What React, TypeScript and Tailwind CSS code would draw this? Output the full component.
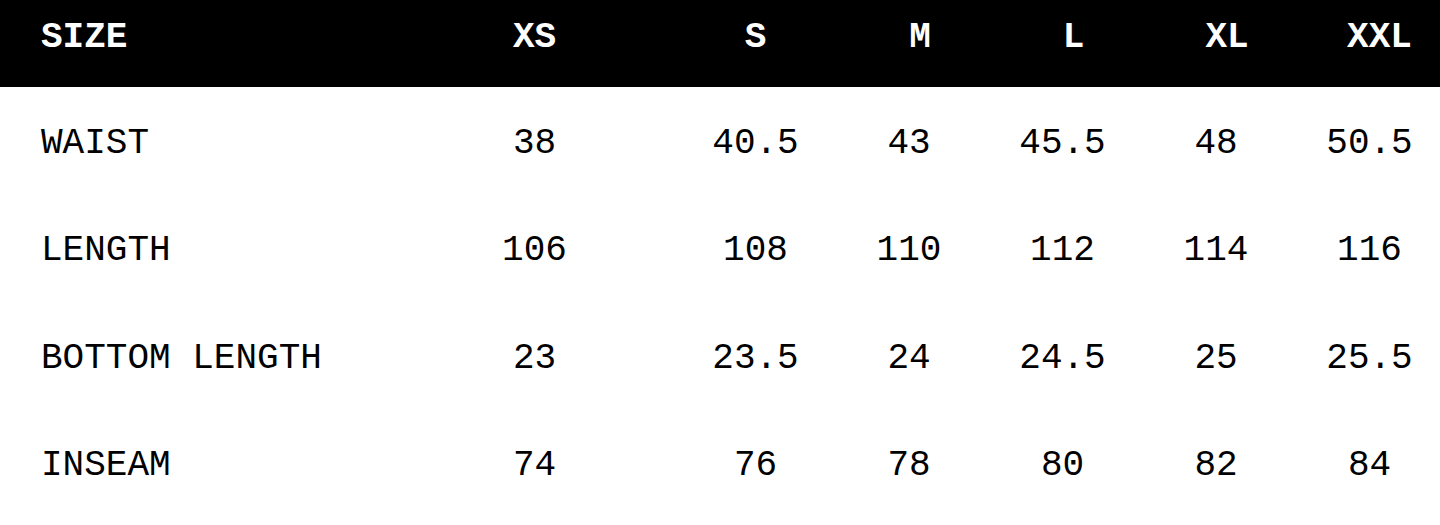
import React from 'react';

const sizes = ['XS', 'S', 'M', 'L', 'XL', 'XXL'];

const rows: { label: string; values: string[] }[] = [
    { label: 'WAIST', values: ['38', '40.5', '43', '45.5', '48', '50.5'] },
    { label: 'LENGTH', values: ['106', '108', '110', '112', '114', '116'] },
    { label: 'BOTTOM LENGTH', values: ['23', '23.5', '24', '24.5', '25', '25.5'] },
    { label: 'INSEAM', values: ['74', '76', '78', '80', '82', '84'] },
];

// column grid shared by header and body rows
const gridCols = 'grid grid-cols-[390px_289px_153px_154px_153px_154px_147px]';

// header labels from M onwards sit about half a character to the right
const headerShift = ['', '', 'pl-[22px]', 'pl-[22px]', 'pl-[22px]', 'pl-[26px]'];

const App = () => {
    return (
        <div
            className="w-[1440px] h-[525px] bg-white overflow-hidden text-[36px] leading-[41px] text-black"
            style={{ fontFamily: '"Courier New", "Liberation Mono", monospace' }}
        >
            {/* Header */}
            <div className={`${gridCols} h-[87px] bg-black text-white font-bold pt-[17px]`}>
                <div className="pl-[41px]">SIZE</div>
                {sizes.map((size, i) => (
                    <div key={size} className={`text-center ${headerShift[i]}`}>
                        {size}
                    </div>
                ))}
            </div>

            {/* Body */}
            {rows.map((row) => (
                <div key={row.label} className={`${gridCols} h-[107.33px] pt-[36px]`}>
                    <div className="pl-[41px] whitespace-nowrap">{row.label}</div>
                    {row.values.map((value, i) => (
                        <div key={i} className={`text-center ${i === 5 ? 'pl-[6px]' : ''}`}>
                            {value}
                        </div>
                    ))}
                </div>
            ))}
        </div>
    );
};

export default App;
